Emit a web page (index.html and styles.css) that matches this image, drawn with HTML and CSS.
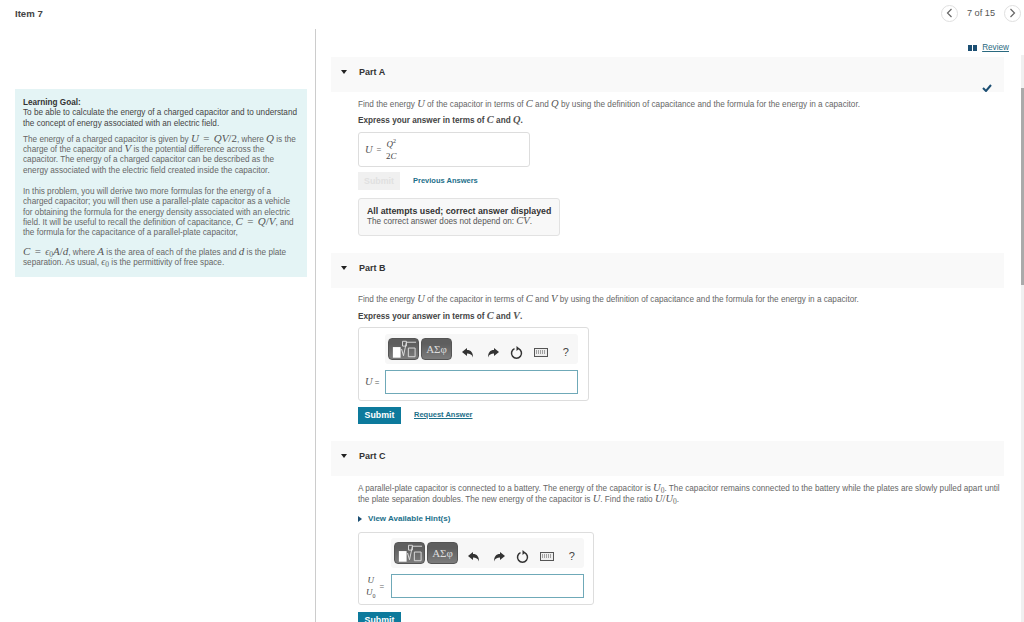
FILE: index.html
```html
<!DOCTYPE html>
<html lang="en">
<head>
    <meta charset="UTF-8">
    <title>Item 7</title>
    <link rel="stylesheet" href="styles.css">
</head>
<body>
    <!-- Top bar -->
    <header class="topbar">
        <h1 class="item-title">Item 7</h1>
        <nav class="pager">
            <span class="pager-btn">
                <svg width="7" height="10" viewBox="0 0 7 10"><path d="M5.5 1 1.5 5l4 4" fill="none" stroke="#666" stroke-width="1.2"/></svg>
            </span>
            <span class="pager-text">7 of 15</span>
            <span class="pager-btn">
                <svg width="7" height="10" viewBox="0 0 7 10"><path d="M1.5 1l4 4-4 4" fill="none" stroke="#666" stroke-width="1.2"/></svg>
            </span>
        </nav>
    </header>

    <div class="layout">
        <!-- Intro column -->
        <aside class="intro">
            <div class="goal">
                <p class="goal-lead"><b>Learning Goal:</b><br>To be able to calculate the energy of a charged capacitor and to understand<br>the concept of energy associated with an electric field.</p>
                <p class="goal-a">The energy of a charged capacitor is given by <i class="m">U</i> <span class="m m-eq">=</span> <i class="m">QV</i><span class="m">/2</span>, where <i class="m">Q</i> is the<br>charge of the capacitor and <i class="m">V</i> is the potential difference across the<br>capacitor. The energy of a charged capacitor can be described as the<br>energy associated with the electric field created inside the capacitor.</p>
                <p class="goal-b">In this problem, you will derive two more formulas for the energy of a<br>charged capacitor; you will then use a parallel-plate capacitor as a vehicle<br>for obtaining the formula for the energy density associated with an electric<br>field. It will be useful to recall the definition of capacitance, <i class="m">C</i> <span class="m m-eq">=</span> <i class="m">Q</i><span class="m">/</span><i class="m">V</i>, and<br>the formula for the capacitance of a parallel-plate capacitor,</p>
                <p class="goal-c"><i class="m">C</i> <span class="m m-eq">=</span> <i class="m-sm">ϵ<sub>0</sub></i><i class="m">A</i><span class="m">/</span><i class="m">d</i>, where <i class="m">A</i> is the area of each of the plates and <i class="m">d</i> is the plate<br>separation. As usual, <i class="m-sm">ϵ<sub>0</sub></i> is the permittivity of free space.</p>
            </div>
        </aside>

        <main class="parts">
            <div class="review-row">
                <a class="review-link">
                    <svg width="9" height="6" viewBox="0 0 9 6"><path d="M0 0h4v6H0zM5 0h4v6H5z" fill="#1c4f73"/></svg>
                    <u>Review</u>
                </a>
            </div>

            <!-- Part A -->
            <section class="part part-a">
                <div class="part-head">
                    <span class="caret"></span><span class="part-name">Part A</span>
                    <svg class="check" width="10" height="8" viewBox="0 0 10 8"><path d="M1 4l3 3 5-6" fill="none" stroke="#1c4f73" stroke-width="2"/></svg>
                </div>
                <div class="part-body">
                    <p class="question">Find the energy <i class="m">U</i> of the capacitor in terms of <i class="m">C</i> and <i class="m">Q</i> by using the definition of capacitance and the formula for the energy in a capacitor.</p>
                    <p class="express">Express your answer in terms of <i class="m">C</i> and <i class="m">Q</i>.</p>
                    <div class="answer-static">
                        <i class="m">U</i><span class="eq">=</span>
                        <span class="frac"><span class="frac-top"><i>Q</i><sup>2</sup></span><span>2<i>C</i></span></span>
                    </div>
                    <div class="actions actions-a">
                        <span class="btn btn-off">Submit</span>
                        <a class="link-bold">Previous Answers</a>
                    </div>
                    <div class="feedback">
                        <b>All attempts used; correct answer displayed</b>
                        <span>The correct answer does not depend on: <i class="m">CV</i>.</span>
                    </div>
                </div>
            </section>

            <!-- Part B -->
            <section class="part part-b">
                <div class="part-head">
                    <span class="caret"></span><span class="part-name">Part B</span>
                </div>
                <div class="part-body">
                    <p class="question">Find the energy <i class="m">U</i> of the capacitor in terms of <i class="m">C</i> and <i class="m">V</i> by using the definition of capacitance and the formula for the energy in a capacitor.</p>
                    <p class="express">Express your answer in terms of <i class="m">C</i> and <i class="m">V</i>.</p>
                    <div class="editor editor-b">
                        <div class="toolbar">
                            <span class="tool-dark tool-tpl">
                                <svg width="30" height="20" viewBox="0 0 30 20"><path d="M4 8h8v11H4z" fill="#fff"/><path d="M14 2h4v5h-4zM20 9h7v9h-7z" fill="none" stroke="#ddd"/><path d="M13 10l2 7 3-14h10" fill="none" stroke="#ddd"/></svg>
                            </span>
                            <span class="tool-dark tool-sym">ΑΣφ</span>
                            <span class="tool-icon"><svg width="12" height="11" viewBox="0 0 12 11"><path d="M5 1 0 5l5 4V6.500c3 0 5 1 6 4 0-5-2-7.500-6-7.500z" fill="#333"/></svg></span>
                            <span class="tool-icon"><svg width="12" height="11" viewBox="0 0 12 11"><path d="M7 1l5 4-5 4V6.500c-3 0-5 1-6 4 0-5 2-7.500 6-7.500z" fill="#333"/></svg></span>
                            <span class="tool-icon"><svg width="13" height="13" viewBox="0 0 13 13"><path d="M8.500 2.600a5 5 0 1 1-4 0" fill="none" stroke="#333" stroke-width="1.500"/><path d="M6.500 0v5l3-2.500z" fill="#333"/></svg></span>
                            <span class="tool-icon"><svg width="14" height="9" viewBox="0 0 14 9"><rect x=".5" y=".5" width="13" height="8" fill="#eee" stroke="#555"/><path d="M2 3h10M2 5h10" stroke="#555" stroke-dasharray="1 1"/></svg></span>
                            <span class="tool-icon tool-help">?</span>
                        </div>
                        <div class="input-row">
                            <span class="input-label"><i class="m">U</i> =</span>
                            <span class="math-input"></span>
                        </div>
                    </div>
                    <div class="actions actions-b">
                        <span class="btn">Submit</span>
                        <a class="link-under">Request Answer</a>
                    </div>
                </div>
            </section>

            <!-- Part C -->
            <section class="part part-c">
                <div class="part-head">
                    <span class="caret"></span><span class="part-name">Part C</span>
                </div>
                <div class="part-body">
                    <p class="question question-c">A parallel-plate capacitor is connected to a battery. The energy of the capacitor is <i class="m">U</i><sub class="m-sub">0</sub>. The capacitor remains connected to the battery while the plates are slowly pulled apart until<br>the plate separation doubles. The new energy of the capacitor is <i class="m">U</i>. Find the ratio <i class="m">U</i><span class="m">/</span><i class="m">U</i><sub class="m-sub">0</sub>.</p>
                    <p class="hints"><span class="caret-right"></span>View Available Hint(s)</p>
                    <div class="editor editor-c">
                        <div class="toolbar">
                            <span class="tool-dark tool-tpl">
                                <svg width="30" height="20" viewBox="0 0 30 20"><path d="M4 8h8v11H4z" fill="#fff"/><path d="M14 2h4v5h-4zM20 9h7v9h-7z" fill="none" stroke="#ddd"/><path d="M13 10l2 7 3-14h10" fill="none" stroke="#ddd"/></svg>
                            </span>
                            <span class="tool-dark tool-sym">ΑΣφ</span>
                            <span class="tool-icon"><svg width="12" height="11" viewBox="0 0 12 11"><path d="M5 1 0 5l5 4V6.500c3 0 5 1 6 4 0-5-2-7.500-6-7.500z" fill="#333"/></svg></span>
                            <span class="tool-icon"><svg width="12" height="11" viewBox="0 0 12 11"><path d="M7 1l5 4-5 4V6.500c-3 0-5 1-6 4 0-5 2-7.500 6-7.500z" fill="#333"/></svg></span>
                            <span class="tool-icon"><svg width="13" height="13" viewBox="0 0 13 13"><path d="M8.500 2.600a5 5 0 1 1-4 0" fill="none" stroke="#333" stroke-width="1.500"/><path d="M6.500 0v5l3-2.500z" fill="#333"/></svg></span>
                            <span class="tool-icon"><svg width="14" height="9" viewBox="0 0 14 9"><rect x=".5" y=".5" width="13" height="8" fill="#eee" stroke="#555"/><path d="M2 3h10M2 5h10" stroke="#555" stroke-dasharray="1 1"/></svg></span>
                            <span class="tool-icon tool-help">?</span>
                        </div>
                        <div class="input-row">
                            <span class="input-label input-frac">
                                <span class="frac"><span class="frac-top"><i>U</i></span><span><i>U</i><sub>0</sub></span></span><span class="eq">=</span>
                            </span>
                            <span class="math-input"></span>
                        </div>
                    </div>
                    <div class="actions actions-c">
                        <span class="btn">Submit</span>
                    </div>
                </div>
            </section>
        </main>

        <div class="scrollbar"><div class="scroll-thumb"></div></div>
    </div>
</body>
</html>
```

FILE: styles.css
```css
html, body {
    margin: 0;
    padding: 0;
    height: 622px;
    overflow: hidden;
}
body {
    font-family: "Liberation Sans", Arial, sans-serif;
    background-color: #fff;
    color: #555;
    font-size: 8.2px;
}
p {
    margin: 0;
}

/* top bar */
.topbar {
    height: 29px;
    display: flex;
    justify-content: space-between;
    align-items: center;
    padding: 0 3px 3px 15px;
    box-sizing: border-box;
}
.item-title {
    margin: 0;
    font-size: 9.6px;
    font-weight: bold;
    color: #444;
}
.pager {
    display: flex;
    align-items: center;
    gap: 9px;
    font-size: 9.2px;
    color: #555;
}
.pager-btn {
    width: 17px;
    height: 17px;
    border: 1px solid #e0e0e0;
    border-radius: 50%;
    display: flex;
    align-items: center;
    justify-content: center;
    box-sizing: border-box;
}

.layout {
    display: flex;
    height: 593px;
}

/* left column */
.intro {
    width: 316px;
    flex: none;
    box-sizing: border-box;
    border-right: 1px solid #ccc;
    padding: 60px 8px 0 15px;
}
.goal {
    height: 188px;
    box-sizing: border-box;
    background-color: #e4f4f5;
    padding: 9px 8px 0 8px;
    line-height: 10.3px;
    color: #666;
    white-space: nowrap;
}
.goal b {
    color: #333;
}
.goal-lead {
    color: #444;
}
.goal-a {
    margin-top: 6px;
}
.goal-b {
    margin-top: 11px;
}
.goal-c {
    margin-top: 9px;
}

/* math bits */
.m {
    font-family: "Liberation Serif", "Times New Roman", serif;
    font-size: 10.5px;
    line-height: 0;
    color: #555;
}
.goal .m {
    font-size: 11px;
}
.goal .m-eq {
    margin: 0 2px;
}
.m-sm {
    font-family: "Liberation Serif", "Times New Roman", serif;
    font-size: 10px;
    line-height: 0;
}
.m-sub, .m-sm sub {
    font-family: "Liberation Serif", "Times New Roman", serif;
    font-size: 7.5px;
    font-style: normal;
    line-height: 0;
    vertical-align: -2px;
}

/* parts column */
.parts {
    flex: 1;
    min-width: 0;
    padding: 0 0 0 15px;
}
.review-row {
    height: 28px;
    display: flex;
    justify-content: flex-end;
    align-items: flex-end;
    padding-right: 15px;
    box-sizing: border-box;
    padding-bottom: 5px;
}
.review-link {
    display: flex;
    align-items: center;
    gap: 5px;
    color: #2a6a80;
    font-size: 8.2px;
}
.part-head {
    position: relative;
    width: 673px;
    height: 35px;
    background-color: #f9f9f9;
    font-size: 9px;
    font-weight: bold;
    color: #333;
    display: flex;
    padding: 10px 0 0 10px;
    box-sizing: border-box;
}
.caret {
    width: 0;
    height: 0;
    margin: 3px 12px 0 0;
    border-left: 3.5px solid transparent;
    border-right: 3.5px solid transparent;
    border-top: 4px solid #222;
}
.check {
    position: absolute;
    right: 12px;
    top: 27px;
}
.part-name {
    line-height: 10px;
}
.part-body {
    padding-left: 27px;
}
.question {
    color: #666;
    line-height: 12px;
    white-space: nowrap;
}
.part-a .question {
    margin-top: 7px;
}
.part-b .question {
    margin-top: 6px;
}
.question-c {
    margin-top: 7px;
    line-height: 11px;
}
.express {
    margin-top: 4px;
    font-weight: bold;
    line-height: 12px;
    color: #444;
}
.part-b .express {
    margin-top: 5px;
}
.answer-static {
    width: 172px;
    height: 35px;
    margin-top: 5px;
    border: 1px solid #ddd;
    border-radius: 3px;
    box-sizing: border-box;
    display: flex;
    align-items: center;
    padding-left: 6px;
}
.eq {
    margin: 0 4px 0 4px;
    color: #666;
}
.frac {
    display: inline-flex;
    flex-direction: column;
    align-items: center;
    font-family: "Liberation Serif", "Times New Roman", serif;
    font-size: 9px;
    line-height: 12px;
    color: #444;
}
.frac-top {
    padding: 0 1px;
}
.frac sup, .frac sub {
    font-size: 6px;
    line-height: 0;
}
.actions {
    display: flex;
    align-items: center;
    gap: 13px;
}
.actions-a {
    margin-top: 5px;
}
.actions-b {
    margin-top: 6px;
}
.actions-c {
    margin-top: 7px;
}
.btn {
    width: 43px;
    height: 17px;
    line-height: 17px;
    text-align: center;
    background-color: #0d7a9c;
    color: #fff;
    font-size: 8.8px;
    font-weight: bold;
}
.btn-off {
    width: 42px;
    height: 18px;
    line-height: 18px;
    background-color: #f0f0f0;
    color: #e0e0e0;
}
.link-bold {
    color: #1c6f8a;
    font-size: 7.5px;
    font-weight: bold;
    margin-top: -2px;
}
.link-under {
    color: #1c6f8a;
    font-size: 7.5px;
    font-weight: bold;
    text-decoration: underline;
    margin-top: -2px;
}
.feedback {
    width: 202px;
    height: 38px;
    margin-top: 8px;
    box-sizing: border-box;
    background-color: #f8f8f8;
    border: 1px solid #e2e2e2;
    border-radius: 3px;
    padding: 7px 8px 0;
    display: flex;
    flex-direction: column;
    gap: 1px;
    line-height: 10px;
    white-space: nowrap;
}
.feedback b {
    font-size: 8.8px;
    color: #333;
}
.part-b {
    margin-top: 17px;
}
.part-c {
    margin-top: 17px;
}

/* equation editor */
.editor {
    border: 1px solid #ddd;
    border-radius: 3px;
    box-sizing: border-box;
    margin-top: 4px;
}
.editor-b {
    width: 231px;
    height: 74px;
    padding: 6px 10px 0 26px;
}
.editor-c {
    width: 236px;
    height: 73px;
    padding: 5px 9px 0 32px;
    margin-top: 8px;
}
.toolbar {
    height: 30px;
    background-color: #f7f7f7;
    border-radius: 3px;
    display: flex;
    align-items: center;
    padding-left: 3px;
}
.tool-dark {
    height: 22px;
    box-sizing: border-box;
    border: 1px solid #555;
    border-radius: 4px;
    background: linear-gradient(#5e5e5e 0, #5e5e5e 25%, #7c7c7c 100%);
    color: #ddd;
    display: flex;
    align-items: center;
    justify-content: center;
}
.tool-tpl {
    width: 31px;
    margin-right: 2px;
}
.tool-sym {
    width: 31px;
    font-family: "Liberation Serif", "Times New Roman", serif;
    font-size: 11px;
    margin-right: 4px;
}
.tool-icon {
    width: 24.4px;
    padding-top: 6px;
    display: flex;
    justify-content: center;
    align-items: center;
}
.tool-help {
    font-size: 11px;
    line-height: 12px;
    color: #444;
}
.input-row {
    display: flex;
    align-items: center;
    margin-top: 6px;
    margin-left: -26px;
}
.editor-c .input-row {
    margin-left: -32px;
}
.input-label {
    width: 26px;
    box-sizing: border-box;
    padding-left: 6px;
    font-size: 8px;
    white-space: nowrap;
}
.input-frac {
    width: 32px;
    display: flex;
    align-items: center;
    padding-left: 7px;
}
.input-frac .eq {
    margin: 0 0 0 4px;
}
.math-input {
    flex: 1;
    height: 24px;
    box-sizing: border-box;
    border: 1px solid #6fa9b8;
}
.hints {
    margin-top: 9px;
    font-size: 8px;
    font-weight: bold;
    color: #1c6f8a;
    display: flex;
    align-items: center;
    line-height: 10px;
}
.caret-right {
    width: 0;
    height: 0;
    margin-right: 6px;
    border-top: 3.5px solid transparent;
    border-bottom: 3.5px solid transparent;
    border-left: 4px solid #1c4f73;
}

/* fake scrollbar */
.scrollbar {
    position: absolute;
    right: 0;
    top: 55px;
    width: 3px;
    height: 567px;
    background-color: #f0f0f0;
}
.scroll-thumb {
    margin-top: 33px;
    height: 197px;
    background-color: #aaa;
}
```
